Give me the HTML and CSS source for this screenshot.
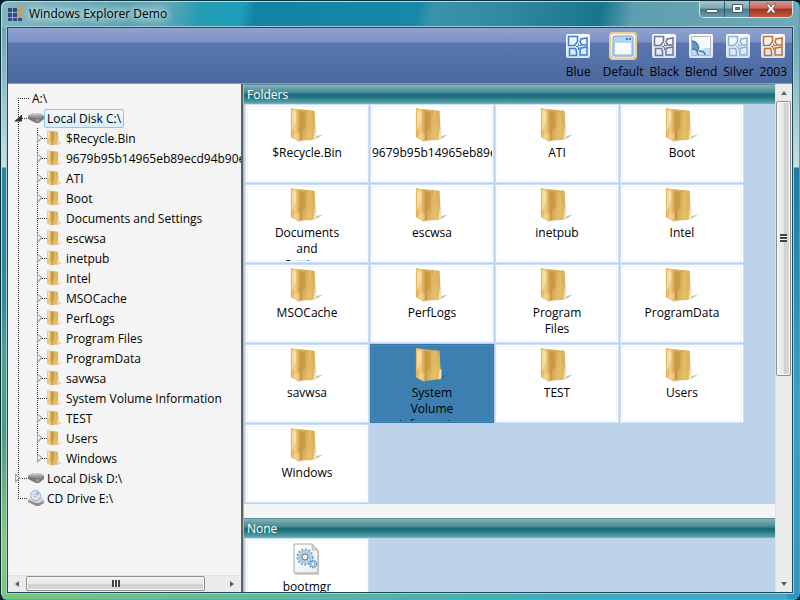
FILE: index.html
```html
<!DOCTYPE html>
<html lang="en">
<head>
<meta charset="utf-8">
<title>Windows Explorer Demo</title>
<link rel="stylesheet" href="styles.css">
</head>
<body>
<svg class="defs" aria-hidden="true">
  <defs>
    <linearGradient id="gFront" x1="0" y1="0" x2="1" y2="0"><stop offset="0" stop-color="#e2ab4c"/><stop offset=".45" stop-color="#f0cd82"/><stop offset="1" stop-color="#c68f35"/></linearGradient>
    <linearGradient id="gBack" x1="0" y1="0" x2="1" y2="1"><stop offset="0" stop-color="#d6ac54"/><stop offset=".5" stop-color="#d9ae58"/><stop offset="1" stop-color="#e6bd62"/></linearGradient>
    <linearGradient id="gDisk" x1="0" y1="0" x2="0" y2="1"><stop offset="0" stop-color="#d4d4d4"/><stop offset="1" stop-color="#777"/></linearGradient>
    <linearGradient id="gPage" x1="0" y1="0" x2="1" y2="1"><stop offset="0" stop-color="#fff"/><stop offset="1" stop-color="#e8ebee"/></linearGradient>
    <symbol id="folder" viewBox="0 0 34 38">
      <path d="M26 31l8-2-6 4-10 3z" fill="#26364a" opacity=".3"/>
      <path d="M7 2l18 2 1 19v11l-17 2z" fill="url(#gBack)"/>
      <path d="M11 5h4v17l-3 3v10H9z" fill="#b98a38" opacity=".55"/>
      <path d="M18 4l4 1v28l-6 1z" fill="#f0ce80" opacity=".35"/>
      <path d="M25 23l2 1v9l-3 1z" fill="#f3e3bb"/>
      <path d="M0 1l7 1 4 3v19l-2 3v10L0 32z" fill="url(#gFront)"/>
      <path d="M1 2l5 4-1 10-4 10z" fill="#fdeec6" opacity=".6"/>
      <path d="M1 31l8 5V27z" fill="#fbe6b4" opacity=".4"/>
    </symbol>
    <symbol id="disk" viewBox="0 0 16 12">
      <path d="M0 4l5-3h7l4 3v3l-5 4H8L0 7z" fill="#777"/>
      <path d="M0 4l5-3h7l4 3-5 3H8z" fill="url(#gDisk)"/>
      <path d="M8 7h3v3H8z" fill="#999"/><path d="M13 7l1-1v1z" fill="#6d6"/>
    </symbol>
    <symbol id="cd" viewBox="0 0 16 16">
      <path d="M0 10l5-3h8l3 4v2l-5 3H8l-8-4z" fill="#8d8d8d"/>
      <path d="M0 10l5-3h8l3 4-5 2H8z" fill="#d2d2d2"/>
      <circle cx="7.500" cy="5.500" r="5" fill="#dce9f4" stroke="#8fa3b5" stroke-width=".8"/>
      <path d="M7.500 5.500L9 1l3 3z" fill="#8fc2ee"/><circle cx="7.500" cy="5.500" r="1.500" fill="#fff" stroke="#778" stroke-width=".6"/>
    </symbol>
    <symbol id="settings" viewBox="0 0 28 32">
      <path d="M2 2h18l6 6v24H2z" fill="#777" opacity=".35"/>
      <path d="M1 1h18l6 6v23H1z" fill="url(#gPage)" stroke="#a9a9a9"/>
      <path d="M19 1v6h6z" fill="#d5d5d5" stroke="#aaa" stroke-width=".6"/>
      <circle cx="12" cy="14" r="7.500" fill="none" stroke="#6f9dc4" stroke-width="2" stroke-dasharray="2 1.500"/>
      <circle cx="12" cy="14" r="5" fill="none" stroke="#a9cde7" stroke-width="4"/>
      <circle cx="12" cy="14" r="3" fill="#f5f5f5" stroke="#6e7882"/>
      <circle cx="20" cy="21" r="3.500" fill="none" stroke="#5288b8" stroke-width="1.500" stroke-dasharray="1.500 1"/>
      <circle cx="20" cy="21" r="2" fill="#fff" stroke="#8ab8db" stroke-width="1.500"/>
    </symbol>
    <symbol id="panes" viewBox="0 0 24 24">
      <g fill="none" stroke="currentColor" stroke-width="1.500">
        <path d="M2.500 2.500h9v5l-3 4h-6zM15 5l6-1v7h-5l-2-3zM3.500 14.500h6l1 3v4h-7zM15 14l6-1v8h-7v-5z"/>
        <path d="M10 12.500h2v2M12.500 9.500v2h3M12.500 16v-2h2" stroke-width="1"/>
      </g>
    </symbol>
  </defs>
</svg>

<div class="window">
  <header class="titlebar">
    <svg class="app-icon" viewBox="0 0 16 16" aria-hidden="true">
      <path d="M0 2h4v4H0zM5 2h4v4H5zM0 7h4v4H0zM5 7h4v4H5zM0 12h4v3H0zM5 12h4v3H5zM10 12h4v3h-4z" fill="#34478c"/>
      <path d="M13 0l3 3-3 3-3-3zM10 7h4v4h-4z" fill="#eb962a"/>
    </svg>
    <h1 class="title">Windows Explorer Demo</h1>
    <div class="captions">
      <button class="cap" aria-label="Minimize"><svg viewBox="0 0 14 12"><path d="M1.500 6.500h11v3h-11z" fill="#fff" stroke="#4a5c66"/></svg></button>
      <button class="cap" aria-label="Maximize"><svg viewBox="0 0 14 12"><path d="M2.500 1.500h10v8h-10z" fill="#fff" stroke="#4a5c66"/><path d="M5.500 4.500h4v2h-4z" fill="#789" stroke="#4a5c66"/></svg></button>
      <button class="cap close" aria-label="Close"><svg viewBox="0 0 14 12"><path d="M2 1h3l2 3 2-3h3L9 5.500l3 4.500H9L7 7.500 5 10H2l3-4.500z" fill="#fff" stroke="#5a4a4a" stroke-width=".8"/></svg></button>
    </div>
  </header>

  <main class="client">
    <nav class="toolbar" aria-label="Themes">
      <button class="theme first"><span class="chip blue"><svg><use href="#panes"/></svg></span>Blue</button>
      <button class="theme"><span class="chip current"><svg viewBox="0 0 24 24"><rect x="2" y="2" width="20" height="20" rx="2" fill="#b9d3ea" stroke="#7fa5cc"/><path d="M4 9h16v11H4z" fill="#f7fbff"/><path d="M15 4h2v2h-2zM18 4h2v2h-2z" fill="#4d7ca8"/></svg></span>Default</button>
      <button class="theme"><span class="chip black"><svg><use href="#panes"/></svg></span>Black</button>
      <button class="theme"><span class="chip"><svg viewBox="0 0 24 24"><path d="M2.500 2.500h19v19h-19z" fill="#f6f9fc" stroke="#b9b5b0"/><path d="M3 7c5 1 6 5 6 8l-6 6z" fill="#6b98c6"/><path d="M3 15c4 0 6 2 6 6H3zM10 21c0-5 5-8 11-7v7z" fill="#c2dbf0"/><path d="M3 7c6 1 8 7 5 11M3 15c4 0 6 2 6 6M10 17c4 0 6 2 6 4" fill="none" stroke="#4176ab" stroke-width="1.500"/></svg></span>Blend</button>
      <button class="theme"><span class="chip silver"><svg><use href="#panes"/></svg></span>Silver</button>
      <button class="theme"><span class="chip orange"><svg><use href="#panes"/></svg></span>2003</button>
    </nav>

    <div class="split">
      <aside class="tree-pane">
        <ul class="tree">
          <li><a class="row bare" href="#"><i class="dash"></i><span class="label">A:\</span></a></li>
          <li><a class="row" href="#"><i class="twist open"></i><i class="dash"></i><svg class="drive"><use href="#disk"/></svg><span class="label selected">Local Disk C:\</span></a>
            <ul class="branch">
              <li><a class="row" href="#"><i class="twist"></i><i class="dash"></i><svg class="dir"><use href="#folder"/></svg><span class="label">$Recycle.Bin</span></a></li>
              <li><a class="row" href="#"><i class="twist"></i><i class="dash"></i><svg class="dir"><use href="#folder"/></svg><span class="label">9679b95b14965eb89ecd94b90e9</span></a></li>
              <li><a class="row" href="#"><i class="twist"></i><i class="dash"></i><svg class="dir"><use href="#folder"/></svg><span class="label">ATI</span></a></li>
              <li><a class="row" href="#"><i class="twist"></i><i class="dash"></i><svg class="dir"><use href="#folder"/></svg><span class="label">Boot</span></a></li>
              <li><a class="row" href="#"><i class="twist none"></i><i class="dash"></i><svg class="dir"><use href="#folder"/></svg><span class="label">Documents and Settings</span></a></li>
              <li><a class="row" href="#"><i class="twist"></i><i class="dash"></i><svg class="dir"><use href="#folder"/></svg><span class="label">escwsa</span></a></li>
              <li><a class="row" href="#"><i class="twist"></i><i class="dash"></i><svg class="dir"><use href="#folder"/></svg><span class="label">inetpub</span></a></li>
              <li><a class="row" href="#"><i class="twist"></i><i class="dash"></i><svg class="dir"><use href="#folder"/></svg><span class="label">Intel</span></a></li>
              <li><a class="row" href="#"><i class="twist"></i><i class="dash"></i><svg class="dir"><use href="#folder"/></svg><span class="label">MSOCache</span></a></li>
              <li><a class="row" href="#"><i class="twist"></i><i class="dash"></i><svg class="dir"><use href="#folder"/></svg><span class="label">PerfLogs</span></a></li>
              <li><a class="row" href="#"><i class="twist"></i><i class="dash"></i><svg class="dir"><use href="#folder"/></svg><span class="label">Program Files</span></a></li>
              <li><a class="row" href="#"><i class="twist"></i><i class="dash"></i><svg class="dir"><use href="#folder"/></svg><span class="label">ProgramData</span></a></li>
              <li><a class="row" href="#"><i class="twist"></i><i class="dash"></i><svg class="dir"><use href="#folder"/></svg><span class="label">savwsa</span></a></li>
              <li><a class="row" href="#"><i class="twist none"></i><i class="dash"></i><svg class="dir"><use href="#folder"/></svg><span class="label">System Volume Information</span></a></li>
              <li><a class="row" href="#"><i class="twist"></i><i class="dash"></i><svg class="dir"><use href="#folder"/></svg><span class="label">TEST</span></a></li>
              <li><a class="row" href="#"><i class="twist"></i><i class="dash"></i><svg class="dir"><use href="#folder"/></svg><span class="label">Users</span></a></li>
              <li><a class="row" href="#"><i class="twist"></i><i class="dash"></i><svg class="dir"><use href="#folder"/></svg><span class="label">Windows</span></a></li>
            </ul>
          </li>
          <li><a class="row" href="#"><i class="twist"></i><i class="dash"></i><svg class="drive"><use href="#disk"/></svg><span class="label">Local Disk D:\</span></a></li>
          <li><a class="row" href="#"><i class="twist none"></i><i class="dash"></i><svg class="drive cd"><use href="#cd"/></svg><span class="label">CD Drive E:\</span></a></li>
        </ul>
        <div class="hscroll">
          <button class="arrow" aria-label="Scroll left"><svg viewBox="0 0 8 8"><path d="M6 1v6L2 4z"/></svg></button>
          <div class="track"><div class="thumb"><i class="grip"></i></div></div>
          <button class="arrow" aria-label="Scroll right"><svg viewBox="0 0 8 8"><path d="M2 1v6l4-3z"/></svg></button>
        </div>
      </aside>

      <div class="splitter"></div>

      <section class="content">
        <h2 class="group-title">Folders</h2>
        <div class="tiles">
          <button class="tile"><svg class="pic"><use href="#folder"/></svg><span class="name">$Recycle.Bin</span></button>
          <button class="tile"><svg class="pic"><use href="#folder"/></svg><span class="name">9679b95b14965eb89ec</span></button>
          <button class="tile"><svg class="pic"><use href="#folder"/></svg><span class="name">ATI</span></button>
          <button class="tile"><svg class="pic"><use href="#folder"/></svg><span class="name">Boot</span></button>
          <button class="tile"><svg class="pic"><use href="#folder"/></svg><span class="name">Documents and Settings</span></button>
          <button class="tile"><svg class="pic"><use href="#folder"/></svg><span class="name">escwsa</span></button>
          <button class="tile"><svg class="pic"><use href="#folder"/></svg><span class="name">inetpub</span></button>
          <button class="tile"><svg class="pic"><use href="#folder"/></svg><span class="name">Intel</span></button>
          <button class="tile"><svg class="pic"><use href="#folder"/></svg><span class="name">MSOCache</span></button>
          <button class="tile"><svg class="pic"><use href="#folder"/></svg><span class="name">PerfLogs</span></button>
          <button class="tile"><svg class="pic"><use href="#folder"/></svg><span class="name">Program Files</span></button>
          <button class="tile"><svg class="pic"><use href="#folder"/></svg><span class="name">ProgramData</span></button>
          <button class="tile"><svg class="pic"><use href="#folder"/></svg><span class="name">savwsa</span></button>
          <button class="tile selected"><svg class="pic"><use href="#folder"/></svg><span class="name">System Volume Information</span></button>
          <button class="tile"><svg class="pic"><use href="#folder"/></svg><span class="name">TEST</span></button>
          <button class="tile"><svg class="pic"><use href="#folder"/></svg><span class="name">Users</span></button>
          <button class="tile"><svg class="pic"><use href="#folder"/></svg><span class="name">Windows</span></button>
        </div>
        <h2 class="group-title second">None</h2>
        <div class="tiles">
          <button class="tile"><svg class="pic file"><use href="#settings"/></svg><span class="name">bootmgr</span></button>
        </div>
      </section>

      <div class="vscroll">
        <button class="arrow" aria-label="Scroll up"><svg viewBox="0 0 8 8"><path d="M1 6h6L4 2z"/></svg></button>
        <div class="track"><div class="thumb"><i class="grip"></i></div></div>
        <button class="arrow" aria-label="Scroll down"><svg viewBox="0 0 8 8"><path d="M1 2h6L4 6z"/></svg></button>
      </div>
    </div>
  </main>
</div>
</body>
</html>
```
FILE: styles.css
```css
* { box-sizing: border-box; }

body {
  margin: 0;
  background: #0a1c24;
  color: #000;
  font: 12px/16px "Open Sans", "Noto Sans", sans-serif;
}

button {
  margin: 0;
  padding: 0;
  border: 0;
  background: none;
  color: inherit;
  font: inherit;
}

ul { margin: 0; padding: 0; list-style: none; }
h1, h2 { margin: 0; font-weight: 400; font-size: 12px; }
.defs { position: absolute; width: 0; height: 0; }

/* Window frame */
.window {
  display: flex;
  flex-direction: column;
  height: 100vh;
  padding: 0 6px 6px;
  overflow: hidden;
  border: 1px solid #10303a;
  border-bottom-color: #12c4ea;
  border-right-color: #08bce4;
  border-radius: 7px;
  box-shadow: inset 1px 1px 0 #b5dce4;
  background:
    linear-gradient(100deg, #86b7c2 0, #5ba0af 16%, #6aa8b4 20%, #259db5 25%, #1f9fba 30%, #1283a5 32%, #1788a8 52%, #3a93ac 54%, #3189a2 63%, #19758f 75%, #5d9eaf 79%, #72aab8 100%) 0 0 / 100% 27px no-repeat,
    linear-gradient(#6ba6b4 28px, #a8ced5 120px, #c7e0e3 166px, #278798 167px, #2e8c9d 300px, #4da394 350px, #4f9c7c 430px, #8dc978 540px, #7fc578) 0 0 / 12px 100% no-repeat,
    linear-gradient(#6ba6b4 28px, #a8ced5 120px, #c7e0e3 166px, #1e7ba0 167px, #3aa0c8 400px, #3794b8) 100% 0 / 12px 100% no-repeat,
    linear-gradient(90deg, #7fc578, #64bb93 30%, #3fa7ba 75%, #4aa4c4);
}

.titlebar { display: flex; flex: none; height: 26px; padding-left: 1px; }
.app-icon { width: 16px; height: 16px; margin-top: 5px; }
.title {
  margin: 4px 0 0 5px;
  line-height: 18px;
  text-shadow: 0 0 6px #d7f0f4, 0 0 8px #d7f0f4, 0 0 12px #c4e6ec;
}
.captions {
  display: flex;
  height: 17px;
  margin-left: auto;
  overflow: hidden;
  border: 1px solid #cfe3e8;
  border-top: 0;
  border-radius: 0 0 5px 5px;
}
.cap {
  display: grid;
  place-items: center;
  width: 25px;
  border-right: 1px solid #315a66;
  background: linear-gradient(#a9c6cd, #7fa7b2 45%, #44798a 50%, #6b9eac);
}
.cap svg { width: 14px; height: 12px; }
.cap.close { width: 42px; border: 0; background: linear-gradient(#d79a90, #c46a5c 45%, #a52e1e 50%, #c25a42); }

.client {
  display: flex;
  flex: 1;
  flex-direction: column;
  min-height: 0;
  border: 1px solid #1d4a58;
  outline: 1px solid #a4cfd6;
}

/* Theme toolbar */
.toolbar {
  display: flex;
  flex: none;
  justify-content: flex-end;
  gap: 6px;
  height: 56px;
  padding: 4px 5px 0;
  border-bottom: 1px solid #8597bd;
  background: linear-gradient(#8fa3cf, #7b93c6 14px, #5a75b0 15px, #4b6a9c 55px);
}
.theme { display: flex; flex-direction: column; align-items: center; }
.theme.first { margin-right: 6px; }
.chip {
  display: grid;
  place-items: center;
  width: 28px;
  height: 28px;
  margin: 0 -3px 4px;
  border: 2px solid transparent;
  border-radius: 4px;
  background: linear-gradient(#f8fbff, #d5e5f7) padding-box;
}
.chip svg { width: 24px; height: 24px; }
.chip.current { border-color: #f3cb8a; }
.blue { color: #3a7fd0; }
.black { color: #77738d; }
.silver { color: #8fb2cd; }
.orange { color: #c87022; }

.split { display: flex; flex: 1; min-height: 0; background: #f4f4f4; }

/* Folder tree */
.tree-pane { display: flex; flex: 0 0 30%; flex-direction: column; min-width: 0; max-width: 233px; }
.tree {
  margin: 4px 0 auto 6px;
  background: repeating-linear-gradient(#333 0 1px, transparent 1px 2px) 4px 10px / 1px calc(100% - 20px) no-repeat;
  overflow: hidden;
}
.branch {
  margin-left: 20px;
  background: repeating-linear-gradient(#333 0 1px, transparent 1px 2px) 3px 0 / 1px calc(100% - 10px) no-repeat;
}
.row { display: flex; align-items: center; height: 20px; color: inherit; text-decoration: none; white-space: nowrap; }
.row.bare { padding-left: 4px; }
.twist { flex: none; width: 8px; height: 10px; background: #a5a5a5; clip-path: polygon(1px 0, 7px 5px, 1px 10px, 1px 8px, 5px 5px, 2px 2px, 2px 8px, 1px 10px); }
.branch .twist { width: 6px; margin-left: 2px; }
.twist.open { height: 7px; background: #333; clip-path: polygon(8px 0, 8px 7px, 0 7px); }
.twist.none { background: none; }
.twist.none + .dash { margin-left: -4px; width: 10px; }
.dash { flex: none; width: 6px; height: 1px; background: repeating-linear-gradient(90deg, #333 0 1px, transparent 1px 2px); }
.bare .dash { width: 11px; }
.branch .dash { width: 5px; }
.branch .twist.none + .dash { width: 9px; }
.drive { flex: none; width: 16px; height: 12px; }
.drive.cd { height: 16px; }
.dir { flex: none; width: 15px; height: 16px; }
.label { padding: 0 2px; border: 1px solid transparent; border-radius: 2px; line-height: 17px; }
.branch .label { margin-left: 1px; }
.label.selected { border-color: #86c9ee; background: linear-gradient(#f2f9fe, #d9effb); }

/* Scroll bars */
.hscroll, .vscroll { display: flex; flex: none; background: #ebebeb; }
.hscroll { height: 17px; border-top: 1px solid #e2e2e2; }
.vscroll { flex-direction: column; width: 17px; border-left: 1px solid #e2e2e2; }
.track { flex: 1; min-height: 0; }
.thumb { display: grid; place-items: center; border: 1px solid #8f8f8f; border-radius: 2px; box-shadow: inset 0 0 0 1px #fafafa; }
.arrow { display: grid; place-items: center; flex: none; width: 18px; height: 16px; }
.arrow svg { width: 8px; height: 8px; fill: #606060; }
.vscroll .arrow { width: 16px; height: 17px; }
.hscroll .thumb { width: 91%; height: 15px; background: linear-gradient(#f4f4f4, #e6e6e6 50%, #cfcfcf 51%, #d6d6d6); }
.vscroll .thumb { width: 15px; height: 58%; background: linear-gradient(90deg, #f4f4f4, #e6e6e6 50%, #cfcfcf 51%, #d6d6d6); }
.grip { width: 8px; height: 7px; background: repeating-linear-gradient(90deg, #444 0 2px, #fff 2px 3px); }
.vscroll .grip { width: 7px; height: 8px; background: repeating-linear-gradient(#444 0 2px, #fff 2px 3px); }

.splitter { flex: none; width: 3px; background: linear-gradient(90deg, #606060 66%, #a8b8c8 66%); }

/* Grouped tiles */
.content { flex: 1; min-width: 0; overflow: hidden; }
.group-title {
  height: 20px;
  padding-left: 3px;
  border-top: 1px solid #5f9097;
  border-bottom: 1px solid #85a8ac;
  background: linear-gradient(#86b0b8, #3f8791 45%, #1c6a78 50%, #1f7280 65%, #5ba5a8);
  color: #fff;
  line-height: 19px;
}
.group-title.second { margin-top: 14px; }
.tiles {
  display: grid;
  grid-template-columns: repeat(auto-fill, 124px);
  grid-auto-rows: 79px;
  gap: 1px;
  padding-left: 1px;
  padding-bottom: 1px;
  background: #bcd3ea;
}
.tile {
  display: flex;
  flex-direction: column;
  align-items: center;
  min-width: 0;
  padding: 2px 1px 1px;
  overflow: hidden;
  border: 1px solid #cfdff2;
  background: #fff;
  box-shadow: inset 0 0 0 1px #fff, inset 0 0 0 2px #eff4fc;
}
.tile.selected { border-color: #3375a8; background: #3c7fb1; box-shadow: inset 0 0 0 1px #4a8aba; }
.pic { flex: none; width: 34px; height: 36px; margin-bottom: 2px; }
.pic.file { padding: 2px 0; }
.name { flex: 1; width: min-content; max-width: 100%; min-height: 0; overflow: hidden; }
```
